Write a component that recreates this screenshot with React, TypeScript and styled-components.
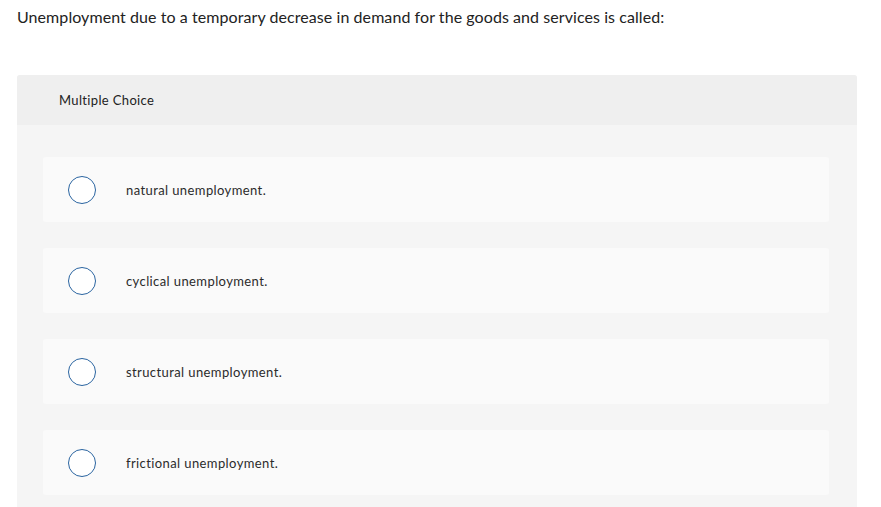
import styled, { createGlobalStyle } from "styled-components";

const GlobalStyle = createGlobalStyle`
  body {
    margin: 0;
    background: #ffffff;
    font-family: Lato, "Liberation Sans", sans-serif;
    color: #2b2b2b;
  }
`;

const Page = styled.div`
  padding: 7px 24px 0 17px;
`;

const Question = styled.p`
  margin: 0 0 48px;
  font-size: 16px;
  line-height: 20px;
  letter-spacing: 0.07px;
  color: #222;
`;

const Panel = styled.section`
  width: 840px;
  border-radius: 3px 3px 0 0;
  overflow: hidden;
  background: #f5f5f5;
`;

const PanelHeader = styled.div`
  height: 50px;
  display: flex;
  align-items: center;
  padding-left: 42px;
  background: #efefef;
  font-size: 13px;
  letter-spacing: 0.35px;
  color: #222;
`;

const Options = styled.div`
  display: flex;
  flex-direction: column;
  gap: 26px;
  padding: 32px 28px 12px 26px;
`;

const Option = styled.label`
  height: 65px;
  display: flex;
  align-items: center;
  gap: 30px;
  padding-left: 25px;
  background: #fafafa;
  border-radius: 3px;
  font-size: 13px;
  letter-spacing: 0.4px;
  color: #2b2b2b;
  cursor: pointer;
`;

const Radio = styled.span`
  width: 28px;
  height: 28px;
  box-sizing: border-box;
  border: 1.5px solid #2a64a0;
  border-radius: 50%;
  background: #fff;
  flex-shrink: 0;
`;

const choices = [
  "natural unemployment.",
  "cyclical unemployment.",
  "structural unemployment.",
  "frictional unemployment.",
];

export default function App() {
  return (
    <>
      <GlobalStyle />
      <Page>
        <Question>
          Unemployment due to a temporary decrease in demand for the goods and
          services is called:
        </Question>
        <Panel>
          <PanelHeader>Multiple Choice</PanelHeader>
          <Options>
            {choices.map((c) => (
              <Option key={c}>
                <Radio />
                {c}
              </Option>
            ))}
          </Options>
        </Panel>
      </Page>
    </>
  );
}
